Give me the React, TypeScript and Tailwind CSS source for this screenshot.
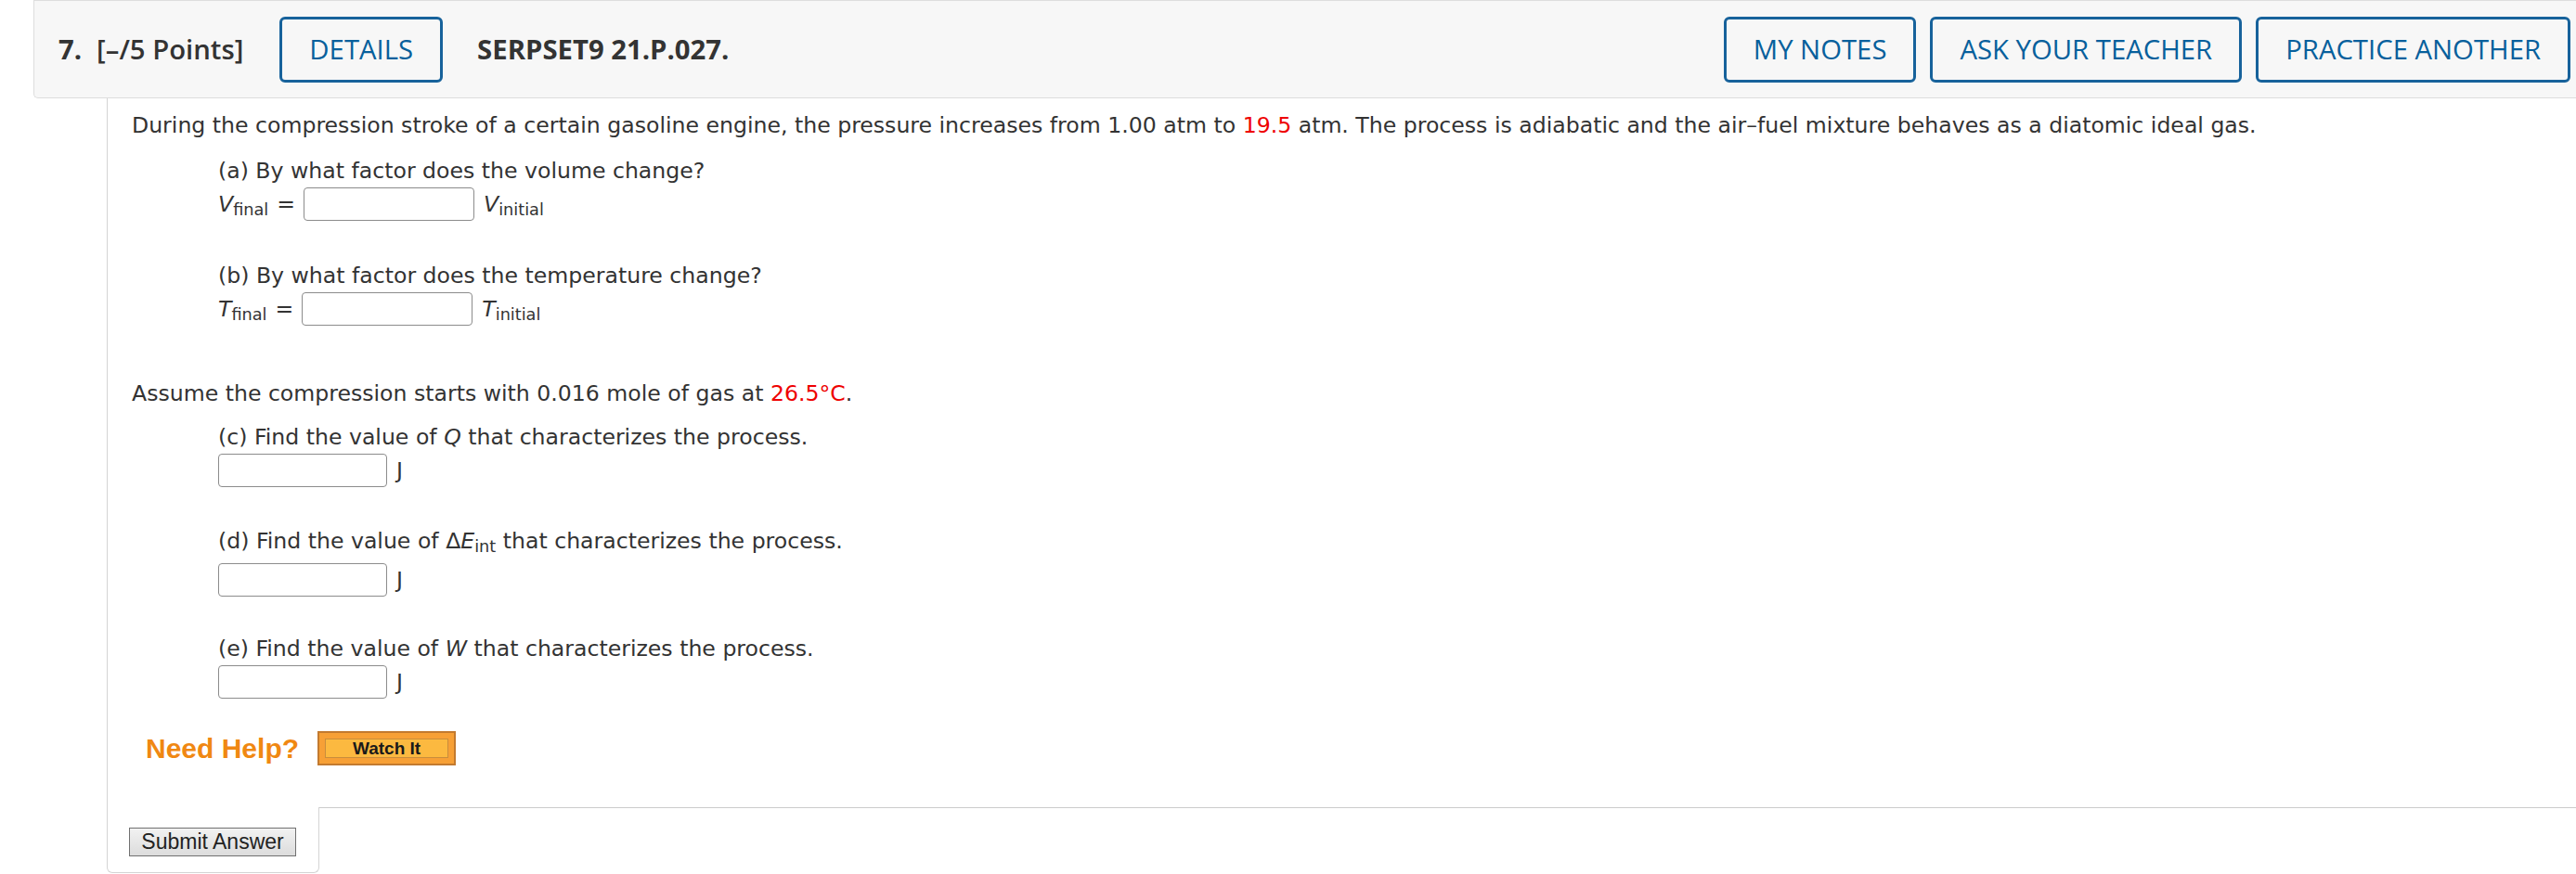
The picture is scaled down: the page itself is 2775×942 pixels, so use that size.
import React from 'react'

const HEAD_FONT = "font-['Open_Sans',Arial,sans-serif]"
const BODY_FONT = "font-['DejaVu_Sans',Verdana,sans-serif]"
const ARIAL = "font-['Liberation_Sans',Arial,sans-serif]"

const HEAD_BTN =
  'h-[71px] px-[29px] flex items-center rounded-[6px] border-[3px] border-[#17629b] text-[#07609c] text-[29.3px] bg-[#f7f7f7]'

const INPUT_CLASS = 'h-[36px] border border-[#8c8c8c] rounded-[4px] bg-white outline-none'

function Red({ children }: { children: React.ReactNode }) {
  return <span className="text-[#ee0000]">{children}</span>
}

function Sym({ v, sub }: { v: string; sub: string }) {
  return (
    <span>
      <i>{v}</i>
      <sub>{sub}</sub>
    </span>
  )
}

function FactorRow({ v }: { v: string }) {
  return (
    <div className="flex items-center h-[36px]">
      <Sym v={v} sub="final" />
      <span className="ml-[9px]">=</span>
      <input type="text" className={INPUT_CLASS + ' w-[184px] ml-[9px]'} />
      <span className="ml-[10px]">
        <Sym v={v} sub="initial" />
      </span>
    </div>
  )
}

function UnitRow() {
  return (
    <div className="flex items-center h-[36px]">
      <input type="text" className={INPUT_CLASS + ' w-[182px]'} />
      <span className="ml-[10px]">J</span>
    </div>
  )
}

export default function App() {
  return (
    <div className="w-[2775px] h-[942px] bg-white overflow-hidden text-[#333]">
      <div
        className={
          HEAD_FONT +
          ' ml-[36px] h-[106px] bg-[#f7f7f7] border border-r-0 border-[#dddddd] rounded-bl-[5px] flex items-center pl-[26px] pr-[6px] pt-[1px]'
        }
      >
        <span className="text-[29.3px] font-bold text-[#333]">7.</span>
        <span className="ml-[16px] text-[29.3px] font-semibold text-[#333]">[–/5 Points]</span>
        <button className={HEAD_BTN + ' ml-[39px]'}>DETAILS</button>
        <span className="ml-[37px] text-[29.3px] font-bold text-[#333]">SERPSET9 21.P.027.</span>
        <div className="ml-auto flex items-center gap-[15px]">
          <button className={HEAD_BTN}>MY NOTES</button>
          <button className={HEAD_BTN}>ASK YOUR TEACHER</button>
          <button className={HEAD_BTN}>PRACTICE ANOTHER</button>
        </div>
      </div>

      <div className={BODY_FONT + ' ml-[115px] border-l border-[#d4d4d4] text-[23.6px] leading-[35px]'}>
        <div className="pl-[26px] pt-[12px]">
          <p>
            During the compression stroke of a certain gasoline engine, the pressure increases from 1.00 atm to{' '}
            <Red>19.5</Red> atm. The process is adiabatic and the air–fuel mixture behaves as a diatomic ideal gas.
          </p>

          <div className="pl-[93px]">
            <p className="mt-[14px]">(a) By what factor does the volume change?</p>
            <FactorRow v="V" />
            <p className="mt-[42px]">(b) By what factor does the temperature change?</p>
            <FactorRow v="T" />
          </div>

          <p className="mt-[56px]">
            Assume the compression starts with 0.016 mole of gas at <Red>26.5°C</Red>.
          </p>

          <div className="pl-[93px]">
            <p className="mt-[12px]">
              (c) Find the value of <i>Q</i> that characterizes the process.
            </p>
            <UnitRow />
            <p className="mt-[41px]">
              (d) Find the value of Δ<Sym v="E" sub="int" /> that characterizes the process.
            </p>
            <div className="mt-[6px]">
              <UnitRow />
            </div>
            <p className="mt-[39px]">
              (e) Find the value of <i>W</i> that characterizes the process.
            </p>
            <UnitRow />
          </div>

          <div className={ARIAL + ' flex items-center mt-[35px] pl-[15px] h-[37px]'}>
            <span className="text-[30px] font-bold text-[#f08812] leading-none">Need Help?</span>
            <button className="ml-[20px] w-[149px] h-[37px] p-[6px] bg-[#f7a036] border-2 border-[#c37a2f]">
              <span className="flex items-center justify-center w-full h-full bg-[#fcb940] border border-[#c98d3c] text-[19px] font-bold text-[#1a1a1a] leading-none">
                Watch It
              </span>
            </button>
          </div>
          <div className="h-[45px]" />
        </div>
      </div>

      <div className="flex ml-[115px]">
        <div className="w-[229px] h-[71px] border-l border-r border-b border-[#d4d4d4] rounded-b-[6px] pl-[23px] pt-[22px]">
          <button
            className={
              ARIAL +
              ' w-[180px] h-[31px] border border-[#707070] bg-gradient-to-b from-[#f2f2f2] to-[#dcdcdc] text-[23px] text-[#222] leading-none'
            }
          >
            Submit Answer
          </button>
        </div>
        <div className="flex-1 border-t border-[#cccccc]" />
      </div>
    </div>
  )
}
